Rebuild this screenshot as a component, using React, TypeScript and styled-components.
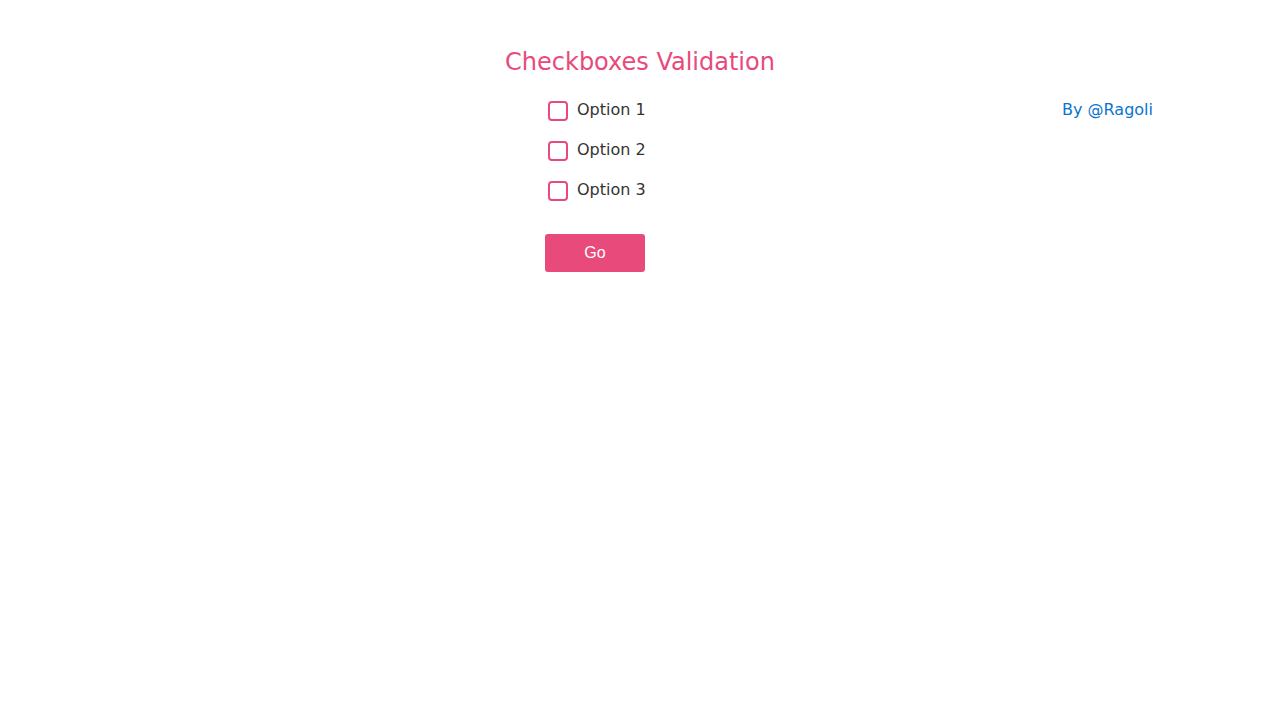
import React, { useState } from 'react';
import styled, { createGlobalStyle } from 'styled-components';

const GlobalStyle = createGlobalStyle`
  body {
    margin: 0;
    background: #fff;
    font-family: "DejaVu Sans", sans-serif;
  }
`;

const PINK = '#e84a7b';

const Page = styled.div`
  position: relative;
  width: 100%;
  min-height: 720px;
  padding-top: 45px;
  box-sizing: border-box;
`;

const Title = styled.h1`
  margin: 0 0 22px;
  text-align: center;
  font-size: 24px;
  font-weight: 400;
  line-height: 34px;
  color: ${PINK};
`;

const Credit = styled.a`
  position: absolute;
  top: 100px;
  right: 127px;
  font-size: 16px;
  line-height: 20px;
  color: #0a74cf;
  text-decoration: none;
`;

const Form = styled.form`
  width: 190px;
  margin: 0 auto;
  display: flex;
  flex-direction: column;
  align-items: flex-start;
`;

const Options = styled.div`
  display: flex;
  flex-direction: column;
  gap: 20px;
  padding-left: 3px;
  margin-bottom: 33px;
`;

const OptionRow = styled.label`
  display: flex;
  align-items: flex-start;
  gap: 9px;
  height: 20px;
  font-size: 16px;
  line-height: 18px;
  color: #333;
  cursor: pointer;
`;

const Box = styled.span<{ $checked: boolean }>`
  width: 20px;
  height: 20px;
  box-sizing: border-box;
  border: 2px solid ${PINK};
  border-radius: 4px;
  background: ${(p) => (p.$checked ? PINK : '#fff')};
  flex-shrink: 0;
`;

const Hidden = styled.input`
  display: none;
`;

const GoButton = styled.button`
  width: 100px;
  height: 38px;
  border: none;
  border-radius: 3px;
  background: ${PINK};
  color: #fff;
  font-family: "Liberation Sans", Arial, sans-serif;
  font-size: 16px;
  cursor: pointer;
`;

export default function App() {
  const [checked, setChecked] = useState<boolean[]>([false, false, false]);
  const toggle = (i: number) =>
    setChecked((c) => c.map((v, j) => (j === i ? !v : v)));

  return (
    <Page>
      <GlobalStyle />
      <Title>Checkboxes Validation</Title>
      <Credit href="#">By @Ragoli</Credit>
      <Form onSubmit={(e) => e.preventDefault()}>
        <Options>
          {checked.map((v, i) => (
            <OptionRow key={i}>
              <Hidden type="checkbox" checked={v} onChange={() => toggle(i)} />
              <Box $checked={v} />
              Option {i + 1}
            </OptionRow>
          ))}
        </Options>
        <GoButton type="submit">Go</GoButton>
      </Form>
    </Page>
  );
}
